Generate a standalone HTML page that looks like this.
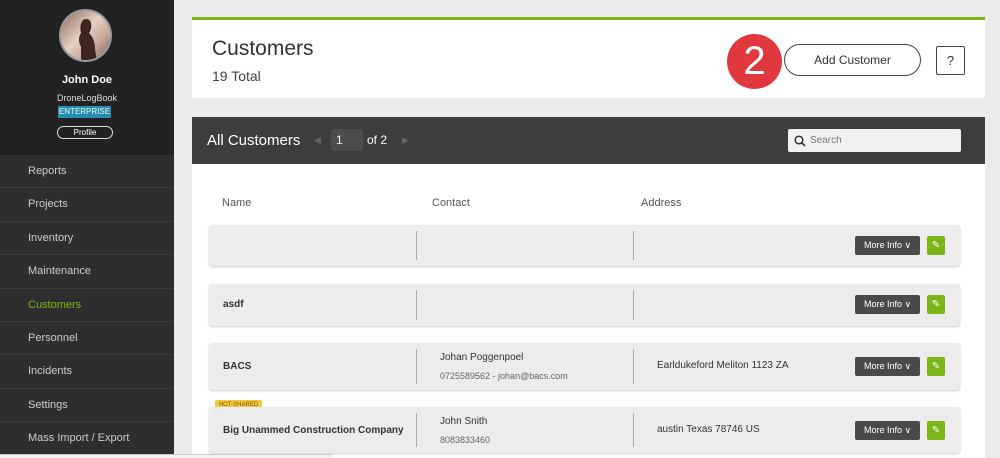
<!DOCTYPE html>
<html><head><style>
*{box-sizing:border-box;margin:0;padding:0}
body{width:1000px;height:458px;overflow:hidden;background:#ebebeb;font-family:"Liberation Sans",sans-serif;position:relative}
.sb{position:absolute;left:0;top:0;width:174px;height:458px;background:#2e2e2e}
.sbtop{height:155px;background:#222;text-align:center;color:#fff}
.av{position:absolute;left:59px;top:9px;width:53px;height:53px;border-radius:50%;border:2px solid #999;overflow:hidden;background:linear-gradient(135deg,#8a6a5e,#e6cfc2 45%,#c7a99c 70%,#7d625a)}
.nav{height:33.4px;border-bottom:1px solid #3d3d3d;color:#ccc;font-size:11px;padding-left:28px;line-height:33px}
.abs{position:absolute}
.card{left:192px;top:17px;width:793px;height:81px;background:#fff;border-top:3px solid #7cb518}
.bar{left:192px;top:117px;width:793px;height:47px;background:#3d3d3d}
.panel{left:192px;top:164px;width:793px;height:294px;background:#fff}
.row{position:absolute;left:209px;width:751px;background:#ececec;border-radius:3px;box-shadow:0 1px 2px #ccc}
.dv{position:absolute;top:6px;bottom:6px;width:1px;background:#aaa}
.mi{position:absolute;left:646px;width:65px;height:19px;background:#4a4a4a;color:#fff;font-size:9px;line-height:19px;padding-left:9px;border-radius:2px}
.ed{position:absolute;left:718px;width:18px;height:19px;background:#7cb518;border-radius:2px;color:#fff;font-size:10px;text-align:center;line-height:19px}
.t{position:absolute;font-size:11px;color:#333}
.s{font-size:9px;color:#666}
</style></head><body>
<div class="sb">
<div class="sbtop">
<div class="av"><svg width="53" height="53" viewBox="0 0 53 53" style="position:absolute;left:-2px;top:-2px"><path d="M22 53 L22 38 Q18 30 22 24 Q20 16 24 11 Q30 8 32 14 Q33 20 30 24 Q36 30 36 40 L38 53 Z" fill="#3b2620"/></svg></div>
<div class="abs" style="left:0;width:174px;top:74px;font-size:11px;font-weight:bold">John Doe</div>
<div class="abs" style="left:0;width:174px;top:93px;font-size:9px;color:#ddd">DroneLogBook</div>
<div class="abs" style="left:58px;top:106px;width:53px;height:12px;background:#2a8bb0;font-size:8px;line-height:12px;color:#dfe">ENTERPRISE</div>
<div class="abs" style="left:57px;top:126px;width:56px;height:13px;border:1px solid #ddd;border-radius:7px;font-size:8px;line-height:11px">Profile</div>
</div>
<div class="nav">Reports</div><div class="nav">Projects</div><div class="nav">Inventory</div><div class="nav">Maintenance</div><div class="nav" style="color:#7cb518">Customers</div><div class="nav">Personnel</div><div class="nav">Incidents</div><div class="nav">Settings</div><div class="nav">Mass Import / Export</div>
</div>
<div class="abs card">
<div class="abs" style="left:20px;top:17px;font-size:21px;color:#333">Customers</div>
<div class="abs" style="left:20px;top:48px;font-size:14px;color:#444">19 Total</div>
<div class="abs" style="left:535px;top:14px;width:55px;height:55px;border-radius:50%;background:#e0383e;color:#fff;font-size:40px;text-align:center;line-height:55px">2</div>
<div class="abs" style="left:592px;top:24px;width:137px;height:32px;border:1px solid #444;border-radius:16px;text-align:center;line-height:30px;font-size:12px;color:#333">Add Customer</div>
<div class="abs" style="left:744px;top:26px;width:29px;height:29px;border:1px solid #444;border-radius:2px;text-align:center;line-height:27px;font-size:13px;color:#333">?</div>
</div>
<div class="abs bar">
<div class="abs" style="left:15px;top:15px;font-size:15px;color:#fff">All Customers</div>
<div class="abs" style="left:122px;top:18px;font-size:9px;color:#666">◀</div>
<div class="abs" style="left:139px;top:12px;width:32px;height:22px;background:#4d4d4d;border-radius:3px;color:#fff;font-size:12px;line-height:22px;padding-left:5px">1</div>
<div class="abs" style="left:175px;top:16px;font-size:12px;color:#fff">of 2</div>
<div class="abs" style="left:210px;top:18px;font-size:9px;color:#666">▶</div>
<div class="abs" style="left:596px;top:12px;width:173px;height:23px;background:#f2f2f2;border-radius:2px;font-size:10px;color:#777;line-height:23px;padding-left:22px">Search
<svg class="abs" style="left:6px;top:6px" width="12" height="12" viewBox="0 0 12 12"><circle cx="5" cy="5" r="3.8" fill="none" stroke="#333" stroke-width="1.5"/><path d="M8 8l3 3" stroke="#333" stroke-width="1.6"/></svg></div>
</div>
<div class="abs panel"></div>
<div class="t" style="left:222px;top:197px;color:#555">Name</div>
<div class="t" style="left:432px;top:197px;color:#555">Contact</div>
<div class="t" style="left:641px;top:197px;color:#555">Address</div>

<div class="row" style="top:225px;height:41px"><div class="dv" style="left:207px"></div><div class="dv" style="left:424px"></div><div class="mi" style="top:11px">More Info ∨</div><div class="ed" style="top:11px">✎</div></div>
<div class="row" style="top:284px;height:42px"><div class="t" style="left:14px;top:15px;font-weight:bold;font-size:10px">asdf</div><div class="dv" style="left:207px"></div><div class="dv" style="left:424px"></div><div class="mi" style="top:11px">More Info ∨</div><div class="ed" style="top:11px">✎</div></div>
<div class="row" style="top:343px;height:47px"><div class="t" style="left:14px;top:18px;font-weight:bold;font-size:10px">BACS</div><div class="dv" style="left:207px"></div><div class="t" style="left:231px;top:9px;font-size:10px">Johan Poggenpoel</div><div class="t s" style="left:231px;top:28px">0725589562 - johan@bacs.com</div><div class="dv" style="left:424px"></div><div class="t" style="left:448px;top:17px;font-size:10px">Earldukeford Meliton 1123 ZA</div><div class="mi" style="top:14px">More Info ∨</div><div class="ed" style="top:14px">✎</div></div>
<div class="abs" style="left:215px;top:400px;width:47px;height:10px;background:#f5c842;border-radius:2px;font-size:6px;color:#7a5a00;text-align:center;line-height:10px">NOT-SHARED</div>
<div class="row" style="top:407px;height:46px"><div class="t" style="left:14px;top:18px;font-weight:bold;font-size:10px">Big Unammed Construction Company</div><div class="dv" style="left:207px"></div><div class="t" style="left:231px;top:9px;font-size:10px">John Snith</div><div class="t s" style="left:231px;top:28px">8083833460</div><div class="dv" style="left:424px"></div><div class="t" style="left:448px;top:17px;font-size:10px">austin Texas 78746 US</div><div class="mi" style="top:14px">More Info ∨</div><div class="ed" style="top:14px">✎</div></div>
<div class="abs" style="left:0;top:454px;width:333px;height:4px;background:#f3f3f3;border-top:1px solid #ccc"></div>
</body></html>
